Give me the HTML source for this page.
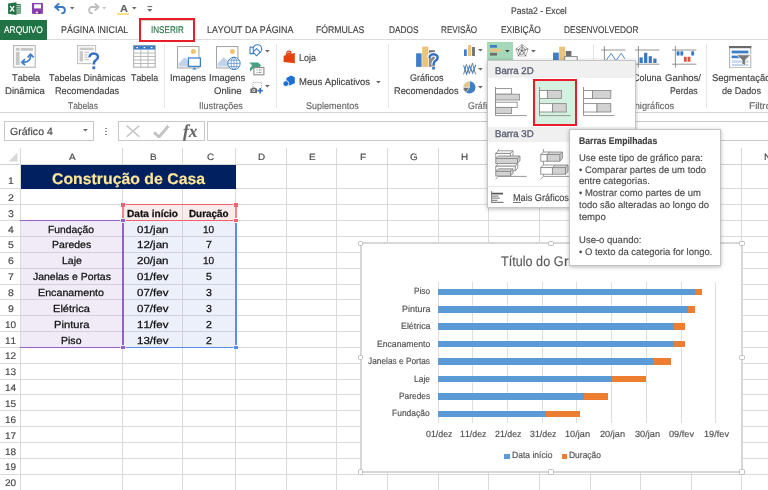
<!DOCTYPE html>
<html><head><meta charset="utf-8"><title>Pasta2 - Excel</title>
<style>
html,body{margin:0;padding:0;background:#fff;}
body{width:768px;height:490px;overflow:hidden;position:relative;font-family:"Liberation Sans",sans-serif;font-kerning:none;}
#root{position:absolute;left:-6px;top:-6px;width:780px;height:502px;overflow:hidden;will-change:transform;filter:blur(0.3px);}
#in{position:absolute;left:6px;top:6px;width:768px;height:490px;}
.t{position:absolute;white-space:nowrap;transform-origin:0 50%;-webkit-text-stroke-width:0.14px;}
.b{position:absolute;box-sizing:border-box;}
</style></head><body><div id="root"><div id="in">
<div class="b" style="left:0.00px;top:147.00px;width:768.00px;height:17.50px;background:#fff;"></div>
<div class="b" style="left:0.00px;top:188.00px;width:768.00px;height:1.00px;background:#dadada;"></div>
<div class="b" style="left:0.00px;top:204.00px;width:768.00px;height:1.00px;background:#dadada;"></div>
<div class="b" style="left:0.00px;top:220.00px;width:768.00px;height:1.00px;background:#dadada;"></div>
<div class="b" style="left:0.00px;top:236.00px;width:768.00px;height:1.00px;background:#dadada;"></div>
<div class="b" style="left:0.00px;top:252.00px;width:768.00px;height:1.00px;background:#dadada;"></div>
<div class="b" style="left:0.00px;top:268.00px;width:768.00px;height:1.00px;background:#dadada;"></div>
<div class="b" style="left:0.00px;top:284.00px;width:768.00px;height:1.00px;background:#dadada;"></div>
<div class="b" style="left:0.00px;top:299.00px;width:768.00px;height:1.00px;background:#dadada;"></div>
<div class="b" style="left:0.00px;top:315.00px;width:768.00px;height:1.00px;background:#dadada;"></div>
<div class="b" style="left:0.00px;top:331.00px;width:768.00px;height:1.00px;background:#dadada;"></div>
<div class="b" style="left:0.00px;top:347.00px;width:768.00px;height:1.00px;background:#dadada;"></div>
<div class="b" style="left:0.00px;top:363.00px;width:768.00px;height:1.00px;background:#dadada;"></div>
<div class="b" style="left:0.00px;top:379.00px;width:768.00px;height:1.00px;background:#dadada;"></div>
<div class="b" style="left:0.00px;top:394.00px;width:768.00px;height:1.00px;background:#dadada;"></div>
<div class="b" style="left:0.00px;top:410.00px;width:768.00px;height:1.00px;background:#dadada;"></div>
<div class="b" style="left:0.00px;top:426.00px;width:768.00px;height:1.00px;background:#dadada;"></div>
<div class="b" style="left:0.00px;top:442.00px;width:768.00px;height:1.00px;background:#dadada;"></div>
<div class="b" style="left:0.00px;top:458.00px;width:768.00px;height:1.00px;background:#dadada;"></div>
<div class="b" style="left:0.00px;top:474.00px;width:768.00px;height:1.00px;background:#dadada;"></div>
<div class="b" style="left:0.00px;top:490.00px;width:768.00px;height:1.00px;background:#dadada;"></div>
<div class="b" style="left:20.00px;top:148.00px;width:1.00px;height:342.00px;background:#dadada;"></div>
<div class="b" style="left:122.00px;top:148.00px;width:1.00px;height:342.00px;background:#dadada;"></div>
<div class="b" style="left:182.00px;top:148.00px;width:1.00px;height:342.00px;background:#dadada;"></div>
<div class="b" style="left:235.00px;top:148.00px;width:1.00px;height:342.00px;background:#dadada;"></div>
<div class="b" style="left:286.00px;top:148.00px;width:1.00px;height:342.00px;background:#dadada;"></div>
<div class="b" style="left:336.00px;top:148.00px;width:1.00px;height:342.00px;background:#dadada;"></div>
<div class="b" style="left:387.00px;top:148.00px;width:1.00px;height:342.00px;background:#dadada;"></div>
<div class="b" style="left:438.00px;top:148.00px;width:1.00px;height:342.00px;background:#dadada;"></div>
<div class="b" style="left:488.00px;top:148.00px;width:1.00px;height:342.00px;background:#dadada;"></div>
<div class="b" style="left:539.00px;top:148.00px;width:1.00px;height:342.00px;background:#dadada;"></div>
<div class="b" style="left:590.00px;top:148.00px;width:1.00px;height:342.00px;background:#dadada;"></div>
<div class="b" style="left:640.00px;top:148.00px;width:1.00px;height:342.00px;background:#dadada;"></div>
<div class="b" style="left:691.00px;top:148.00px;width:1.00px;height:342.00px;background:#dadada;"></div>
<div class="b" style="left:741.00px;top:148.00px;width:1.00px;height:342.00px;background:#dadada;"></div>
<div class="b" style="left:792.00px;top:148.00px;width:1.00px;height:342.00px;background:#dadada;"></div>
<div class="b" style="left:842.00px;top:148.00px;width:1.00px;height:342.00px;background:#dadada;"></div>
<div class="b" style="left:0.00px;top:164.00px;width:768.00px;height:1.00px;background:#d4d4d4;"></div>
<svg class="b" style="left:8.00px;top:152.00px" width="10" height="10" viewBox="0 0 10 10"><path d="M9.5 0.5 V9.5 H0.5 Z" fill="#d9d9d9"/></svg>
<span class="t" style="left:69.33px;top:152px;font-size:9.2px;line-height:10px;color:#444;transform:matrix(1.0814,0,0.0015,1,0,0);">A</span>
<span class="t" style="left:150.43px;top:152px;font-size:9.2px;line-height:10px;color:#444;transform:matrix(1.0814,0,0.0015,1,0,0);">B</span>
<span class="t" style="left:206.58px;top:152px;font-size:9.2px;line-height:10px;color:#444;transform:matrix(1.0753,0,0.0015,1,0,0);">C</span>
<span class="t" style="left:258.48px;top:152px;font-size:9.2px;line-height:10px;color:#444;transform:matrix(1.0753,0,0.0015,1,0,0);">D</span>
<span class="t" style="left:309.33px;top:152px;font-size:9.2px;line-height:10px;color:#444;transform:matrix(1.0814,0,0.0015,1,0,0);">E</span>
<span class="t" style="left:360.19px;top:152px;font-size:9.2px;line-height:10px;color:#444;transform:matrix(1.0889,0,0.0015,1,0,0);">F</span>
<span class="t" style="left:410.02px;top:152px;font-size:9.2px;line-height:10px;color:#444;transform:matrix(1.0699,0,0.0015,1,0,0);">G</span>
<span class="t" style="left:460.88px;top:152px;font-size:9.2px;line-height:10px;color:#444;transform:matrix(1.0753,0,0.0015,1,0,0);">H</span>
<span class="t" style="left:513.52px;top:152px;font-size:9.2px;line-height:10px;color:#444;transform:matrix(1.1951,0,0.0015,1,0,0);">I</span>
<span class="t" style="left:563.10px;top:152px;font-size:9.2px;line-height:10px;color:#444;transform:matrix(1.1088,0,0.0015,1,0,0);">J</span>
<span class="t" style="left:612.93px;top:152px;font-size:9.2px;line-height:10px;color:#444;transform:matrix(1.0814,0,0.0015,1,0,0);">K</span>
<span class="t" style="left:664.04px;top:152px;font-size:9.2px;line-height:10px;color:#444;transform:matrix(1.0976,0,0.0015,1,0,0);">L</span>
<span class="t" style="left:713.37px;top:152px;font-size:9.2px;line-height:10px;color:#444;transform:matrix(1.0653,0,0.0015,1,0,0);">M</span>
<span class="t" style="left:764.48px;top:152px;font-size:9.2px;line-height:10px;color:#444;transform:matrix(1.0753,0,0.0015,1,0,0);">N</span>
<span class="t" style="left:7.63px;top:175px;font-size:9.6px;line-height:11px;color:#444;transform:matrix(1.0936,0,0.0015,1,0,0);">1</span>
<span class="t" style="left:7.63px;top:192px;font-size:9.6px;line-height:11px;color:#444;transform:matrix(1.0936,0,0.0015,1,0,0);">2</span>
<span class="t" style="left:7.63px;top:208px;font-size:9.6px;line-height:11px;color:#444;transform:matrix(1.0936,0,0.0015,1,0,0);">3</span>
<span class="t" style="left:7.63px;top:224px;font-size:9.6px;line-height:11px;color:#444;transform:matrix(1.0936,0,0.0015,1,0,0);">4</span>
<span class="t" style="left:7.63px;top:239px;font-size:9.6px;line-height:11px;color:#444;transform:matrix(1.0936,0,0.0015,1,0,0);">5</span>
<span class="t" style="left:7.63px;top:255px;font-size:9.6px;line-height:11px;color:#444;transform:matrix(1.0936,0,0.0015,1,0,0);">6</span>
<span class="t" style="left:7.63px;top:271px;font-size:9.6px;line-height:11px;color:#444;transform:matrix(1.0936,0,0.0015,1,0,0);">7</span>
<span class="t" style="left:7.63px;top:287px;font-size:9.6px;line-height:11px;color:#444;transform:matrix(1.0936,0,0.0015,1,0,0);">8</span>
<span class="t" style="left:7.63px;top:303px;font-size:9.6px;line-height:11px;color:#444;transform:matrix(1.0936,0,0.0015,1,0,0);">9</span>
<span class="t" style="left:4.96px;top:319px;font-size:9.6px;line-height:11px;color:#444;transform:matrix(1.0469,0,0.0015,1,0,0);">10</span>
<span class="t" style="left:4.96px;top:335px;font-size:9.6px;line-height:11px;color:#444;transform:matrix(1.0469,0,0.0015,1,0,0);">11</span>
<span class="t" style="left:4.96px;top:350px;font-size:9.6px;line-height:11px;color:#444;transform:matrix(1.0469,0,0.0015,1,0,0);">12</span>
<span class="t" style="left:4.96px;top:366px;font-size:9.6px;line-height:11px;color:#444;transform:matrix(1.0469,0,0.0015,1,0,0);">13</span>
<span class="t" style="left:4.96px;top:382px;font-size:9.6px;line-height:11px;color:#444;transform:matrix(1.0469,0,0.0015,1,0,0);">14</span>
<span class="t" style="left:4.96px;top:398px;font-size:9.6px;line-height:11px;color:#444;transform:matrix(1.0469,0,0.0015,1,0,0);">15</span>
<span class="t" style="left:4.96px;top:414px;font-size:9.6px;line-height:11px;color:#444;transform:matrix(1.0469,0,0.0015,1,0,0);">16</span>
<span class="t" style="left:4.96px;top:430px;font-size:9.6px;line-height:11px;color:#444;transform:matrix(1.0469,0,0.0015,1,0,0);">17</span>
<span class="t" style="left:4.96px;top:446px;font-size:9.6px;line-height:11px;color:#444;transform:matrix(1.0469,0,0.0015,1,0,0);">18</span>
<span class="t" style="left:4.96px;top:461px;font-size:9.6px;line-height:11px;color:#444;transform:matrix(1.0469,0,0.0015,1,0,0);">19</span>
<span class="t" style="left:4.96px;top:477px;font-size:9.6px;line-height:11px;color:#444;transform:matrix(1.0469,0,0.0015,1,0,0);">20</span>
<div class="b" style="left:20.50px;top:164.80px;width:215.50px;height:24.10px;background:#002060;"></div>
<span class="t" style="left:51.50px;top:170px;font-size:15.5px;line-height:17px;color:#ffe699;font-weight:bold;transform:matrix(1.0214,0,0.0015,1,0,0);">Construção de Casa</span>
<div class="b" style="left:123.00px;top:204.75px;width:113.00px;height:15.85px;background:#fbebeb;"></div>
<div class="b" style="left:20.50px;top:220.60px;width:102.50px;height:126.80px;background:#f0ebf7;"></div>
<div class="b" style="left:123.00px;top:220.60px;width:113.00px;height:126.80px;background:#ebf0fb;"></div>
<div class="b" style="left:123.00px;top:220.00px;width:113.00px;height:1.00px;background:#d3d0dc;"></div>
<div class="b" style="left:20.50px;top:236.00px;width:215.50px;height:1.00px;background:#d3d0dc;"></div>
<div class="b" style="left:20.50px;top:252.00px;width:215.50px;height:1.00px;background:#d3d0dc;"></div>
<div class="b" style="left:20.50px;top:268.00px;width:215.50px;height:1.00px;background:#d3d0dc;"></div>
<div class="b" style="left:20.50px;top:284.00px;width:215.50px;height:1.00px;background:#d3d0dc;"></div>
<div class="b" style="left:20.50px;top:299.00px;width:215.50px;height:1.00px;background:#d3d0dc;"></div>
<div class="b" style="left:20.50px;top:315.00px;width:215.50px;height:1.00px;background:#d3d0dc;"></div>
<div class="b" style="left:20.50px;top:331.00px;width:215.50px;height:1.00px;background:#d3d0dc;"></div>
<div class="b" style="left:20.50px;top:347.00px;width:215.50px;height:1.00px;background:#d3d0dc;"></div>
<div class="b" style="left:182.00px;top:204.75px;width:1.00px;height:142.65px;background:#d3d3de;"></div>
<div class="b" style="left:125.60px;top:204.10px;width:107.80px;height:1.30px;background:#eb636d;"></div>
<div class="b" style="left:125.60px;top:219.95px;width:107.80px;height:1.30px;background:#eb636d;"></div>
<div class="b" style="left:122.40px;top:207.35px;width:1.20px;height:10.65px;background:#ee8890;"></div>
<div class="b" style="left:235.40px;top:207.35px;width:1.20px;height:10.65px;background:#ee8890;"></div>
<div class="b" style="left:121.20px;top:202.95px;width:3.60px;height:3.60px;background:#eb636d;"></div>
<div class="b" style="left:234.20px;top:202.95px;width:3.60px;height:3.60px;background:#eb636d;"></div>
<div class="b" style="left:234.20px;top:218.80px;width:3.60px;height:3.60px;background:#eb636d;"></div>
<div class="b" style="left:20.40px;top:219.90px;width:100.00px;height:1.40px;background:#9263c6;"></div>
<div class="b" style="left:20.40px;top:346.70px;width:100.00px;height:1.40px;background:#9263c6;"></div>
<div class="b" style="left:122.35px;top:223.20px;width:1.30px;height:121.60px;background:#9263c6;"></div>
<div class="b" style="left:121.20px;top:218.80px;width:3.60px;height:3.60px;background:#9263c6;"></div>
<div class="b" style="left:121.20px;top:345.60px;width:3.60px;height:3.60px;background:#9263c6;"></div>
<div class="b" style="left:125.60px;top:346.70px;width:107.80px;height:1.40px;background:#5d8be8;"></div>
<div class="b" style="left:235.35px;top:223.20px;width:1.30px;height:121.60px;background:#5d8be8;"></div>
<div class="b" style="left:234.20px;top:345.60px;width:3.60px;height:3.60px;background:#5d8be8;"></div>
<span class="t" style="left:127.05px;top:208px;font-size:10.2px;line-height:11px;color:#111;font-weight:bold;transform:matrix(0.9900,0,0.0015,1,0,0);-webkit-text-stroke:0.25px #111;">Data início</span>
<span class="t" style="left:189.25px;top:208px;font-size:10.2px;line-height:11px;color:#111;font-weight:bold;transform:matrix(0.9665,0,0.0015,1,0,0);-webkit-text-stroke:0.25px #111;">Duração</span>
<span class="t" style="left:48.45px;top:224px;font-size:10.2px;line-height:11px;color:#111;transform:matrix(1.0152,0,0.0015,1,0,0);-webkit-text-stroke:0.25px #111;">Fundação</span>
<span class="t" style="left:136.80px;top:224px;font-size:10.2px;line-height:11px;color:#111;transform:matrix(1.1345,0,0.0015,1,0,0);-webkit-text-stroke:0.25px #111;">01/jan</span>
<span class="t" style="left:203.35px;top:224px;font-size:10.2px;line-height:11px;color:#111;transform:matrix(0.9873,0,0.0015,1,0,0);-webkit-text-stroke:0.25px #111;">10</span>
<span class="t" style="left:51.85px;top:239px;font-size:10.2px;line-height:11px;color:#111;transform:matrix(1.0329,0,0.0015,1,0,0);-webkit-text-stroke:0.25px #111;">Paredes</span>
<span class="t" style="left:136.80px;top:239px;font-size:10.2px;line-height:11px;color:#111;transform:matrix(1.1345,0,0.0015,1,0,0);-webkit-text-stroke:0.25px #111;">12/jan</span>
<span class="t" style="left:206.00px;top:239px;font-size:10.2px;line-height:11px;color:#111;transform:matrix(1.0402,0,0.0015,1,0,0);-webkit-text-stroke:0.25px #111;">7</span>
<span class="t" style="left:61.50px;top:255px;font-size:10.2px;line-height:11px;color:#111;transform:matrix(1.0329,0,0.0015,1,0,0);-webkit-text-stroke:0.25px #111;">Laje</span>
<span class="t" style="left:136.80px;top:255px;font-size:10.2px;line-height:11px;color:#111;transform:matrix(1.1345,0,0.0015,1,0,0);-webkit-text-stroke:0.25px #111;">20/jan</span>
<span class="t" style="left:203.35px;top:255px;font-size:10.2px;line-height:11px;color:#111;transform:matrix(0.9873,0,0.0015,1,0,0);-webkit-text-stroke:0.25px #111;">10</span>
<span class="t" style="left:32.50px;top:271px;font-size:10.2px;line-height:11px;color:#111;transform:matrix(1.0265,0,0.0015,1,0,0);-webkit-text-stroke:0.25px #111;">Janelas e Portas</span>
<span class="t" style="left:136.80px;top:271px;font-size:10.2px;line-height:11px;color:#111;transform:matrix(1.1345,0,0.0015,1,0,0);-webkit-text-stroke:0.25px #111;">01/fev</span>
<span class="t" style="left:206.00px;top:271px;font-size:10.2px;line-height:11px;color:#111;transform:matrix(1.0402,0,0.0015,1,0,0);-webkit-text-stroke:0.25px #111;">5</span>
<span class="t" style="left:38.45px;top:287px;font-size:10.2px;line-height:11px;color:#111;transform:matrix(1.0497,0,0.0015,1,0,0);-webkit-text-stroke:0.25px #111;">Encanamento</span>
<span class="t" style="left:136.80px;top:287px;font-size:10.2px;line-height:11px;color:#111;transform:matrix(1.1345,0,0.0015,1,0,0);-webkit-text-stroke:0.25px #111;">07/fev</span>
<span class="t" style="left:206.00px;top:287px;font-size:10.2px;line-height:11px;color:#111;transform:matrix(1.0402,0,0.0015,1,0,0);-webkit-text-stroke:0.25px #111;">3</span>
<span class="t" style="left:53.00px;top:303px;font-size:10.2px;line-height:11px;color:#111;transform:matrix(1.0858,0,0.0015,1,0,0);-webkit-text-stroke:0.25px #111;">Elétrica</span>
<span class="t" style="left:136.80px;top:303px;font-size:10.2px;line-height:11px;color:#111;transform:matrix(1.1345,0,0.0015,1,0,0);-webkit-text-stroke:0.25px #111;">07/fev</span>
<span class="t" style="left:206.00px;top:303px;font-size:10.2px;line-height:11px;color:#111;transform:matrix(1.0402,0,0.0015,1,0,0);-webkit-text-stroke:0.25px #111;">3</span>
<span class="t" style="left:53.70px;top:319px;font-size:10.2px;line-height:11px;color:#111;transform:matrix(1.0997,0,0.0015,1,0,0);-webkit-text-stroke:0.25px #111;">Pintura</span>
<span class="t" style="left:136.80px;top:319px;font-size:10.2px;line-height:11px;color:#111;transform:matrix(1.1345,0,0.0015,1,0,0);-webkit-text-stroke:0.25px #111;">11/fev</span>
<span class="t" style="left:206.00px;top:319px;font-size:10.2px;line-height:11px;color:#111;transform:matrix(1.0402,0,0.0015,1,0,0);-webkit-text-stroke:0.25px #111;">2</span>
<span class="t" style="left:61.20px;top:335px;font-size:10.2px;line-height:11px;color:#111;transform:matrix(1.0339,0,0.0015,1,0,0);-webkit-text-stroke:0.25px #111;">Piso</span>
<span class="t" style="left:136.80px;top:335px;font-size:10.2px;line-height:11px;color:#111;transform:matrix(1.1345,0,0.0015,1,0,0);-webkit-text-stroke:0.25px #111;">13/fev</span>
<span class="t" style="left:206.00px;top:335px;font-size:10.2px;line-height:11px;color:#111;transform:matrix(1.0402,0,0.0015,1,0,0);-webkit-text-stroke:0.25px #111;">2</span>
<div class="b" style="left:359.50px;top:242.30px;width:383.50px;height:230.80px;background:#fff;border:2px solid #d7d7d7;"></div>
<div class="b" style="left:357.70px;top:240.50px;width:5.60px;height:5.60px;background:#fff;border:1px solid #bdbdbd;border-radius:1.4px;"></div>
<div class="b" style="left:548.45px;top:240.50px;width:5.60px;height:5.60px;background:#fff;border:1px solid #bdbdbd;border-radius:1.4px;"></div>
<div class="b" style="left:739.20px;top:240.50px;width:5.60px;height:5.60px;background:#fff;border:1px solid #bdbdbd;border-radius:1.4px;"></div>
<div class="b" style="left:357.70px;top:354.90px;width:5.60px;height:5.60px;background:#fff;border:1px solid #bdbdbd;border-radius:1.4px;"></div>
<div class="b" style="left:739.20px;top:354.90px;width:5.60px;height:5.60px;background:#fff;border:1px solid #bdbdbd;border-radius:1.4px;"></div>
<div class="b" style="left:357.70px;top:469.30px;width:5.60px;height:5.60px;background:#fff;border:1px solid #bdbdbd;border-radius:1.4px;"></div>
<div class="b" style="left:548.45px;top:469.30px;width:5.60px;height:5.60px;background:#fff;border:1px solid #bdbdbd;border-radius:1.4px;"></div>
<div class="b" style="left:739.20px;top:469.30px;width:5.60px;height:5.60px;background:#fff;border:1px solid #bdbdbd;border-radius:1.4px;"></div>
<div class="b" style="left:438.00px;top:282.00px;width:1.00px;height:140.60px;background:#dedede;"></div>
<div class="b" style="left:472.00px;top:282.00px;width:1.00px;height:140.60px;background:#dedede;"></div>
<div class="b" style="left:507.00px;top:282.00px;width:1.00px;height:140.60px;background:#dedede;"></div>
<div class="b" style="left:542.00px;top:282.00px;width:1.00px;height:140.60px;background:#dedede;"></div>
<div class="b" style="left:576.00px;top:282.00px;width:1.00px;height:140.60px;background:#dedede;"></div>
<div class="b" style="left:611.00px;top:282.00px;width:1.00px;height:140.60px;background:#dedede;"></div>
<div class="b" style="left:646.00px;top:282.00px;width:1.00px;height:140.60px;background:#dedede;"></div>
<div class="b" style="left:681.00px;top:282.00px;width:1.00px;height:140.60px;background:#dedede;"></div>
<div class="b" style="left:715.00px;top:282.00px;width:1.00px;height:140.60px;background:#dedede;"></div>
<div class="b" style="left:438.20px;top:288.60px;width:256.78px;height:6.50px;background:#5b9bd5;"></div>
<div class="b" style="left:694.98px;top:288.60px;width:6.94px;height:6.50px;background:#ed7d31;"></div>
<span class="t" style="left:414.10px;top:286px;font-size:9.0px;line-height:10px;color:#505050;transform:matrix(0.9135,0,0.0015,1,0,0);-webkit-text-stroke:0.15px #505050;">Piso</span>
<div class="b" style="left:438.20px;top:306.03px;width:249.84px;height:6.50px;background:#5b9bd5;"></div>
<div class="b" style="left:688.04px;top:306.03px;width:6.94px;height:6.50px;background:#ed7d31;"></div>
<span class="t" style="left:401.70px;top:304px;font-size:9.0px;line-height:10px;color:#505050;transform:matrix(0.9954,0,0.0015,1,0,0);-webkit-text-stroke:0.15px #505050;">Pintura</span>
<div class="b" style="left:438.20px;top:323.46px;width:235.96px;height:6.50px;background:#5b9bd5;"></div>
<div class="b" style="left:674.16px;top:323.46px;width:10.41px;height:6.50px;background:#ed7d31;"></div>
<span class="t" style="left:400.60px;top:321px;font-size:9.0px;line-height:10px;color:#505050;transform:matrix(0.9828,0,0.0015,1,0,0);-webkit-text-stroke:0.15px #505050;">Elétrica</span>
<div class="b" style="left:438.20px;top:340.89px;width:235.96px;height:6.50px;background:#5b9bd5;"></div>
<div class="b" style="left:674.16px;top:340.89px;width:10.41px;height:6.50px;background:#ed7d31;"></div>
<span class="t" style="left:376.90px;top:339px;font-size:9.0px;line-height:10px;color:#505050;transform:matrix(0.9577,0,0.0015,1,0,0);-webkit-text-stroke:0.15px #505050;">Encanamento</span>
<div class="b" style="left:438.20px;top:358.32px;width:215.14px;height:6.50px;background:#5b9bd5;"></div>
<div class="b" style="left:653.34px;top:358.32px;width:17.35px;height:6.50px;background:#ed7d31;"></div>
<span class="t" style="left:368.10px;top:356px;font-size:9.0px;line-height:10px;color:#505050;transform:matrix(0.9247,0,0.0015,1,0,0);-webkit-text-stroke:0.15px #505050;">Janelas e Portas</span>
<div class="b" style="left:438.20px;top:375.75px;width:173.50px;height:6.50px;background:#5b9bd5;"></div>
<div class="b" style="left:611.70px;top:375.75px;width:34.70px;height:6.50px;background:#ed7d31;"></div>
<span class="t" style="left:414.10px;top:374px;font-size:9.0px;line-height:10px;color:#505050;transform:matrix(0.9403,0,0.0015,1,0,0);-webkit-text-stroke:0.15px #505050;">Laje</span>
<div class="b" style="left:438.20px;top:393.18px;width:145.74px;height:6.50px;background:#5b9bd5;"></div>
<div class="b" style="left:583.94px;top:393.18px;width:24.29px;height:6.50px;background:#ed7d31;"></div>
<span class="t" style="left:399.00px;top:391px;font-size:9.0px;line-height:10px;color:#505050;transform:matrix(0.9275,0,0.0015,1,0,0);-webkit-text-stroke:0.15px #505050;">Paredes</span>
<div class="b" style="left:438.20px;top:410.61px;width:107.57px;height:6.50px;background:#5b9bd5;"></div>
<div class="b" style="left:545.77px;top:410.61px;width:34.70px;height:6.50px;background:#ed7d31;"></div>
<span class="t" style="left:392.40px;top:408px;font-size:9.0px;line-height:10px;color:#505050;transform:matrix(0.9418,0,0.0015,1,0,0);-webkit-text-stroke:0.15px #505050;">Fundação</span>
<span class="t" style="left:425.60px;top:429px;font-size:9.0px;line-height:10px;color:#505050;transform:matrix(0.9803,0,0.0015,1,0,0);-webkit-text-stroke:0.15px #505050;">01/dez</span>
<span class="t" style="left:460.30px;top:429px;font-size:9.0px;line-height:10px;color:#505050;transform:matrix(0.9803,0,0.0015,1,0,0);-webkit-text-stroke:0.15px #505050;">11/dez</span>
<span class="t" style="left:495.00px;top:429px;font-size:9.0px;line-height:10px;color:#505050;transform:matrix(0.9803,0,0.0015,1,0,0);-webkit-text-stroke:0.15px #505050;">21/dez</span>
<span class="t" style="left:529.70px;top:429px;font-size:9.0px;line-height:10px;color:#505050;transform:matrix(0.9803,0,0.0015,1,0,0);-webkit-text-stroke:0.15px #505050;">31/dez</span>
<span class="t" style="left:565.15px;top:429px;font-size:9.0px;line-height:10px;color:#505050;transform:matrix(1.0191,0,0.0015,1,0,0);-webkit-text-stroke:0.15px #505050;">10/jan</span>
<span class="t" style="left:599.85px;top:429px;font-size:9.0px;line-height:10px;color:#505050;transform:matrix(1.0191,0,0.0015,1,0,0);-webkit-text-stroke:0.15px #505050;">20/jan</span>
<span class="t" style="left:634.55px;top:429px;font-size:9.0px;line-height:10px;color:#505050;transform:matrix(1.0191,0,0.0015,1,0,0);-webkit-text-stroke:0.15px #505050;">30/jan</span>
<span class="t" style="left:669.25px;top:429px;font-size:9.0px;line-height:10px;color:#505050;transform:matrix(1.0191,0,0.0015,1,0,0);-webkit-text-stroke:0.15px #505050;">09/fev</span>
<span class="t" style="left:703.95px;top:429px;font-size:9.0px;line-height:10px;color:#505050;transform:matrix(1.0191,0,0.0015,1,0,0);-webkit-text-stroke:0.15px #505050;">19/fev</span>
<span class="t" style="left:501.40px;top:253px;font-size:14px;line-height:16px;color:#595959;transform:matrix(0.9023,0,0.0015,1,0,0);">Título do G</span>
<span class="t" style="left:564.20px;top:253px;font-size:14px;line-height:16px;color:#595959;transform:matrix(1.0021,0,0.0015,1,0,0);">r</span>
<div class="b" style="left:504.20px;top:454.00px;width:5.40px;height:4.80px;background:#5b9bd5;"></div>
<span class="t" style="left:512.30px;top:450px;font-size:9.0px;line-height:10px;color:#505050;transform:matrix(0.9499,0,0.0015,1,0,0);-webkit-text-stroke:0.15px #505050;">Data início</span>
<div class="b" style="left:561.50px;top:454.00px;width:5.40px;height:4.80px;background:#ed7d31;"></div>
<span class="t" style="left:569.10px;top:450px;font-size:9.0px;line-height:10px;color:#505050;transform:matrix(0.9403,0,0.0015,1,0,0);-webkit-text-stroke:0.15px #505050;">Duração</span>
<div class="b" style="left:0.00px;top:0.00px;width:768.00px;height:147.00px;background:#fff;"></div>
<span class="t" style="left:510.90px;top:5px;font-size:9.6px;line-height:11px;color:#444;transform:matrix(0.9004,0,0.0015,1,0,0);">Pasta2 - Excel</span>
<svg class="b" style="left:8.00px;top:1.60px" width="13" height="13.4" viewBox="0 0 13 13.4"><rect x="7.6" y="2.4" width="4.6" height="8.8" fill="#e4f0e8" stroke="#217346" stroke-width="0.9"/>
<path d="M8 4.6H12.2M8 6.8H12.2M8 9H12.2M10 2.4V11.2" stroke="#217346" stroke-width="0.7"/>
<path d="M0.1 1.5 L8.5 0.3 V13 L0.1 11.7Z" fill="#217346"/>
<path d="M2.2 4.1L6.2 9.5M6.2 4.1L2.2 9.5" stroke="#fff" stroke-width="1.3"/></svg>
<svg class="b" style="left:31.80px;top:3.10px" width="11" height="11" viewBox="0 0 11 11"><rect x="0" y="0" width="10.9" height="10.8" fill="#8a40b0"/><rect x="2.1" y="1.3" width="6.9" height="4.1" fill="#fff"/><rect x="2.4" y="7.6" width="6.2" height="3.2" fill="#7a35a0"/><rect x="3.8" y="8.6" width="2.1" height="1.7" fill="#fff"/></svg>
<svg class="b" style="left:54.00px;top:3.00px" width="16" height="11.4" viewBox="0 0 16 11.4"><path d="M1.6 4 H8.4 A3.3 3.3 0 0 1 8.4 10.4 H7.2" fill="none" stroke="#3a78c2" stroke-width="1.9"/><path d="M5.2 0.4 L1.2 4 L5.2 7.6" fill="none" stroke="#3a78c2" stroke-width="1.9"/></svg>
<svg class="b" style="left:70.20px;top:7.00px" width="5" height="3" viewBox="0 0 5 3"><path d="M0 0H4.4L2.2 2.4Z" fill="#666"/></svg>
<svg class="b" style="left:85.50px;top:3.00px" width="14" height="11.4" viewBox="0 0 14 11.4"><path d="M12 4 H5.6 A3.3 3.3 0 0 0 5.6 10.4 H6.8" fill="none" stroke="#bdbdbd" stroke-width="1.8"/><path d="M8.8 0.5 L12.6 4 L8.8 7.5" fill="none" stroke="#bdbdbd" stroke-width="1.8"/></svg>
<svg class="b" style="left:101.60px;top:7.00px" width="5" height="3" viewBox="0 0 5 3"><path d="M0 0H4.4L2.2 2.4Z" fill="#c8c8c8"/></svg>
<span class="t" style="left:119.70px;top:3px;font-size:10.2px;line-height:11px;color:#666;font-weight:bold;transform:matrix(1.0735,0,0.0015,1,0,0);">A</span>
<div class="b" style="left:116.70px;top:12.70px;width:12.80px;height:2.00px;background:#f7e184;"></div>
<svg class="b" style="left:132.00px;top:7.20px" width="5" height="3" viewBox="0 0 5 3"><path d="M0 0H4.6L2.3 2.6Z" fill="#666"/></svg>
<svg class="b" style="left:147.20px;top:5.60px" width="6" height="7" viewBox="0 0 6 7"><path d="M0.4 0.6H5.2" stroke="#666" stroke-width="1"/><path d="M0.2 3H5.4L2.8 5.8Z" fill="#666"/></svg>
<div class="b" style="left:0.00px;top:39.00px;width:768.00px;height:1.00px;background:#dcdcdc;"></div>
<div class="b" style="left:0.00px;top:19.70px;width:46.60px;height:19.90px;background:#217346;"></div>
<span class="t" style="left:4.30px;top:24px;font-size:9.7px;line-height:11px;color:#fff;transform:matrix(0.8660,0,0.0015,1,0,0);">ARQUIVO</span>
<span class="t" style="left:60.60px;top:24px;font-size:9.7px;line-height:11px;color:#3e3e3e;transform:matrix(0.9192,0,0.0015,1,0,0);">PÁGINA INICIAL</span>
<div class="b" style="left:139.80px;top:19.60px;width:55.20px;height:20.60px;background:#fff;border:1px solid #d4d4d4;border-bottom:none;"></div>
<span class="t" style="left:150.90px;top:24px;font-size:9.7px;line-height:11px;color:#217346;transform:matrix(0.8347,0,0.0015,1,0,0);">INSERIR</span>
<div class="b" style="left:139.20px;top:17.70px;width:55.80px;height:24.00px;border:2px solid #e81c2a;"></div>
<span class="t" style="left:206.60px;top:24px;font-size:9.7px;line-height:11px;color:#3e3e3e;transform:matrix(0.9170,0,0.0015,1,0,0);">LAYOUT DA PÁGINA</span>
<span class="t" style="left:316.30px;top:24px;font-size:9.7px;line-height:11px;color:#3e3e3e;transform:matrix(0.8973,0,0.0015,1,0,0);">FÓRMULAS</span>
<span class="t" style="left:388.60px;top:24px;font-size:9.7px;line-height:11px;color:#3e3e3e;transform:matrix(0.8533,0,0.0015,1,0,0);">DADOS</span>
<span class="t" style="left:441.30px;top:24px;font-size:9.7px;line-height:11px;color:#3e3e3e;transform:matrix(0.8403,0,0.0015,1,0,0);">REVISÃO</span>
<span class="t" style="left:500.80px;top:24px;font-size:9.7px;line-height:11px;color:#3e3e3e;transform:matrix(0.8696,0,0.0015,1,0,0);">EXIBIÇÃO</span>
<span class="t" style="left:563.60px;top:24px;font-size:9.7px;line-height:11px;color:#3e3e3e;transform:matrix(0.8542,0,0.0015,1,0,0);">DESENVOLVEDOR</span>
<div class="b" style="left:0.00px;top:112.00px;width:768.00px;height:1.00px;background:#d4d4d4;"></div>
<div class="b" style="left:164.00px;top:43.50px;width:1.00px;height:64.50px;background:#e6e6e6;"></div>
<div class="b" style="left:276.00px;top:43.50px;width:1.00px;height:64.50px;background:#e6e6e6;"></div>
<div class="b" style="left:388.00px;top:43.50px;width:1.00px;height:64.50px;background:#e6e6e6;"></div>
<div class="b" style="left:593.00px;top:43.50px;width:1.00px;height:64.50px;background:#e6e6e6;"></div>
<div class="b" style="left:706.00px;top:43.50px;width:1.00px;height:64.50px;background:#e6e6e6;"></div>
<span class="t" style="left:67.60px;top:100px;font-size:9.7px;line-height:11px;color:#666;transform:matrix(0.8704,0,0.0015,1,0,0);">Tabelas</span>
<span class="t" style="left:199.30px;top:100px;font-size:9.7px;line-height:11px;color:#666;transform:matrix(0.9372,0,0.0015,1,0,0);">Ilustrações</span>
<span class="t" style="left:306.10px;top:100px;font-size:9.7px;line-height:11px;color:#666;transform:matrix(0.9320,0,0.0015,1,0,0);">Suplementos</span>
<span class="t" style="left:468.10px;top:100px;font-size:9.7px;line-height:11px;color:#666;transform:matrix(0.9147,0,0.0015,1,0,0);">Gráficos</span>
<span class="t" style="left:625.40px;top:100px;font-size:9.7px;line-height:11px;color:#666;transform:matrix(0.9519,0,0.0015,1,0,0);">Minigráficos</span>
<span class="t" style="left:748.80px;top:100px;font-size:9.7px;line-height:11px;color:#666;transform:matrix(1.0351,0,0.0015,1,0,0);">Filtros</span>
<svg class="b" style="left:13.00px;top:45.20px" width="23" height="23" viewBox="0 0 23 23"><rect x="0.6" y="0.6" width="21.6" height="21.6" fill="#fff" stroke="#b5b5b5" stroke-width="1.1"/>
<rect x="2.8" y="2.8" width="3.8" height="3" fill="#c6c6c6"/><rect x="7.6" y="2.8" width="12.4" height="3" fill="#c6c6c6"/><rect x="2.8" y="6.8" width="3.8" height="13.2" fill="#c6c6c6"/>
<path d="M9.8 17.2 H11.6 A6 6 0 0 0 17.6 11.2 V9.8" fill="none" stroke="#3c7fc9" stroke-width="1.7"/>
<path d="M12 14.2 L8.8 17.2 L12 20.2" fill="none" stroke="#3c7fc9" stroke-width="1.7"/><path d="M14.6 12.4 L17.6 9.2 L20.6 12.4" fill="none" stroke="#3c7fc9" stroke-width="1.7"/></svg>
<span class="t" style="left:11.60px;top:72px;font-size:9.7px;line-height:11px;color:#3e3e3e;transform:matrix(0.9519,0,0.0015,1,0,0);">Tabela</span>
<span class="t" style="left:5.00px;top:85px;font-size:9.7px;line-height:11px;color:#3e3e3e;transform:matrix(0.9879,0,0.0015,1,0,0);">Dinâmica</span>
<svg class="b" style="left:77.30px;top:45.20px" width="23" height="25" viewBox="0 0 23 25"><rect x="0.6" y="0.6" width="18" height="18" fill="#fff" stroke="#c2c2c2" stroke-width="1.1"/>
<rect x="2.6" y="2.6" width="14" height="2.6" fill="#c9c9c9"/><rect x="2.6" y="6.2" width="3.4" height="10.4" fill="#c9c9c9"/>
<path d="M7.4 7.4H12M7.4 9.8H12M7.4 12.2H12M7.4 14.6H12" stroke="#c9c9c9" stroke-width="1.2"/>
<path d="M12.4 12.2 C12.6 8.8 16 7.8 18.6 8.8 C22 10.2 21.4 13.6 19 15 C17.4 16 16.8 17 16.8 19.4" fill="none" stroke="#fff" stroke-width="4.6"/>
<path d="M12.4 12.2 C12.6 8.8 16 7.8 18.6 8.8 C22 10.2 21.4 13.6 19 15 C17.4 16 16.8 17 16.8 19.4" fill="none" stroke="#3471c1" stroke-width="2.5"/>
<rect x="15.4" y="21.4" width="2.8" height="2.8" fill="#3471c1"/></svg>
<span class="t" style="left:49.20px;top:72px;font-size:9.7px;line-height:11px;color:#3e3e3e;transform:matrix(0.9273,0,0.0015,1,0,0);">Tabelas Dinâmicas</span>
<span class="t" style="left:55.40px;top:85px;font-size:9.7px;line-height:11px;color:#3e3e3e;transform:matrix(0.9461,0,0.0015,1,0,0);">Recomendadas</span>
<svg class="b" style="left:133.30px;top:45.20px" width="23" height="23" viewBox="0 0 23 23"><rect x="0.6" y="0.6" width="21.6" height="21.6" fill="#fff" stroke="#b3b3b3" stroke-width="1.1"/>
<rect x="0.6" y="0.6" width="21.6" height="4" fill="#3d7cc9"/>
<path d="M0.6 8H22.2M0.6 11.5H22.2M0.6 15H22.2M0.6 18.5H22.2M7.8 4.6V22.2M15 4.6V22.2" stroke="#b3b3b3" stroke-width="0.9"/>
<rect x="3.4" y="2" width="1.6" height="1.2" fill="#fff"/><rect x="10.6" y="2" width="1.6" height="1.2" fill="#fff"/><rect x="17.8" y="2" width="1.6" height="1.2" fill="#fff"/></svg>
<span class="t" style="left:131.10px;top:72px;font-size:9.7px;line-height:11px;color:#3e3e3e;transform:matrix(0.9148,0,0.0015,1,0,0);">Tabela</span>
<svg class="b" style="left:177.30px;top:46.00px" width="25" height="25" viewBox="0 0 25 25"><rect x="0.55" y="0.55" width="21.4" height="21.4" fill="#fff" stroke="#a0a0a0" stroke-width="1"/><circle cx="16.4" cy="5.4" r="2.5" fill="#f2c36b"/><path d="M1.6 20.4 V17.6 L7.8 11 L12.4 16 L13.6 14.8 L16 17.4 V20.4Z" fill="#c3d4ea"/><rect x="11.4" y="12" width="12" height="8.4" fill="#fff" stroke="#3c7fc9" stroke-width="1.25"/><path d="M17.4 21.4 L15 23.4 H19.8Z" fill="#3c7fc9"/></svg>
<span class="t" style="left:170.10px;top:72px;font-size:9.7px;line-height:11px;color:#3e3e3e;transform:matrix(0.9662,0,0.0015,1,0,0);">Imagens</span>
<svg class="b" style="left:216.30px;top:46.00px" width="26" height="25" viewBox="0 0 26 25"><rect x="0.55" y="0.55" width="21.4" height="21.4" fill="#fff" stroke="#a0a0a0" stroke-width="1"/><circle cx="16.4" cy="5.4" r="2.5" fill="#f2c36b"/><path d="M1.6 20.4 V17.6 L7.8 11 L12.4 16 L13.6 14.8 L16 17.4 V20.4Z" fill="#c3d4ea"/><circle cx="18" cy="17.4" r="6.2" fill="#fff" stroke="#4a86cc" stroke-width="1"/><path d="M11.8 17.4H24.2M18 11.2V23.6M12.8 14.2H23.2M12.8 20.6H23.2" stroke="#4a86cc" stroke-width="0.7" fill="none"/><ellipse cx="18" cy="17.4" rx="2.9" ry="6.2" fill="none" stroke="#4a86cc" stroke-width="0.7"/></svg>
<span class="t" style="left:209.40px;top:72px;font-size:9.7px;line-height:11px;color:#3e3e3e;transform:matrix(0.9743,0,0.0015,1,0,0);">Imagens</span>
<span class="t" style="left:214.10px;top:85px;font-size:9.7px;line-height:11px;color:#3e3e3e;transform:matrix(0.9816,0,0.0015,1,0,0);">Online</span>
<svg class="b" style="left:249.00px;top:44.00px" width="15" height="13" viewBox="0 0 15 13"><path d="M1 3.2H6.4" stroke="#3c7fc9" stroke-width="1.1" fill="none"/><path d="M1 2.8V9.6H5" stroke="#3c7fc9" stroke-width="1.1" fill="none"/><circle cx="8.4" cy="5" r="4.3" fill="#fff" stroke="#3c7fc9" stroke-width="1.1"/><path d="M7.6 4.6 L11.2 8.2 L7.6 11.8 L4 8.2Z" fill="#fff" stroke="#3c7fc9" stroke-width="1.1"/></svg>
<svg class="b" style="left:265.00px;top:49.70px" width="5" height="3" viewBox="0 0 5 3"><path d="M0 0H4.8L2.4 2.6Z" fill="#666"/></svg>
<svg class="b" style="left:249.00px;top:62.00px" width="16" height="13.5" viewBox="0 0 16 13.5"><path d="M0.4 0.6H9.2L12.2 3.4L9.2 6.2H4.4L1 9.8V6.2L3.2 3.4Z" fill="#46a283"/><rect x="4.9" y="5.6" width="10" height="7.2" fill="#fff" stroke="#8a8a8a" stroke-width="1.1"/><path d="M7.4 8H8.6M9.6 8H12.6M7.4 10.4H8.6M9.6 10.4H12.6" stroke="#8a8a8a" stroke-width="0.9"/></svg>
<svg class="b" style="left:249.60px;top:81.80px" width="14" height="12" viewBox="0 0 14 12"><rect x="3" y="0.5" width="8.6" height="7" fill="none" stroke="#9a9a9a" stroke-width="0.8" stroke-dasharray="1.2 1"/><path d="M0.4 6.6H1.8L2.6 5.6H5.2L6 6.6H7V11H0.4Z" fill="#666"/><circle cx="3.8" cy="8.6" r="1.5" fill="#fff"/><circle cx="3.8" cy="8.6" r="0.8" fill="#666"/><path d="M10.2 6V11.4M7.5 8.7H12.9" stroke="#2f6fc4" stroke-width="1.6"/></svg>
<svg class="b" style="left:265.00px;top:85.30px" width="5" height="3" viewBox="0 0 5 3"><path d="M0 0H4.8L2.4 2.6Z" fill="#666"/></svg>
<svg class="b" style="left:283.00px;top:49.60px" width="13" height="14" viewBox="0 0 13 14"><path d="M0.6 5.7 L11.8 3.1 V13.3 L0.6 11.9Z" fill="#e5420f"/><path d="M2.8 5.4 C2.6 1.6 4.6 0.4 6.4 0.6 C8 0.8 8.6 2.2 8.6 4Z" fill="#e5420f"/><path d="M4.2 3.4 C4.4 2.2 5.6 1.8 6.8 2.6" fill="none" stroke="#fff" stroke-width="0.7"/></svg>
<span class="t" style="left:298.50px;top:52px;font-size:9.7px;line-height:11px;color:#3e3e3e;transform:matrix(0.9221,0,0.0015,1,0,0);">Loja</span>
<svg class="b" style="left:283.00px;top:75.40px" width="13" height="12" viewBox="0 0 13 12"><path d="M3.4 3 L8 0.5 L11.8 2.2 V8.2 L6.6 10.4 L3.4 9.2Z" fill="#1c70d4"/><circle cx="2.9" cy="8.6" r="2.9" fill="#1c70d4" stroke="#fff" stroke-width="0.8"/></svg>
<span class="t" style="left:298.50px;top:76px;font-size:9.7px;line-height:11px;color:#3e3e3e;transform:matrix(0.9782,0,0.0015,1,0,0);">Meus Aplicativos</span>
<svg class="b" style="left:376.30px;top:80.50px" width="5" height="3" viewBox="0 0 5 3"><path d="M0 0H4.8L2.4 2.6Z" fill="#666"/></svg>
<svg class="b" style="left:416.00px;top:46.00px" width="24" height="24" viewBox="0 0 24 24"><rect x="0.1" y="7.3" width="5.5" height="13.6" fill="#3f7fc6"/><rect x="6.2" y="0.6" width="6.2" height="20.3" fill="#ebc37c"/><rect x="13" y="4.2" width="5.9" height="2" fill="#777"/><rect x="13" y="6.2" width="5.9" height="14.7" fill="#8a8a8a"/>
<path d="M13.4 12 C13.6 8.6 17 7.6 19.4 8.6 C22.6 10 22 13.2 19.8 14.6 C18.2 15.6 17.6 16.6 17.6 19" fill="none" stroke="#fff" stroke-width="4.6"/>
<path d="M13.4 12 C13.6 8.6 17 7.6 19.4 8.6 C22.6 10 22 13.2 19.8 14.6 C18.2 15.6 17.6 16.6 17.6 19" fill="none" stroke="#3471c1" stroke-width="2.4"/>
<rect x="15.2" y="20.2" width="4.2" height="3.6" fill="#fff"/><rect x="16.2" y="20.8" width="2.7" height="2.7" fill="#3471c1"/></svg>
<span class="t" style="left:410.00px;top:72px;font-size:9.7px;line-height:11px;color:#3e3e3e;transform:matrix(0.9313,0,0.0015,1,0,0);">Gráficos</span>
<span class="t" style="left:394.10px;top:85px;font-size:9.7px;line-height:11px;color:#3e3e3e;transform:matrix(0.9505,0,0.0015,1,0,0);">Recomendados</span>
<svg class="b" style="left:463.80px;top:45.00px" width="11" height="11" viewBox="0 0 11 11"><rect x="0" y="4.4" width="2.8" height="6.6" fill="#3f7fc6"/><rect x="3.9" y="0" width="3.4" height="11" fill="#ebc37c"/><rect x="8.1" y="2" width="2.8" height="9" fill="#6e6e6e"/></svg>
<svg class="b" style="left:478.10px;top:49.40px" width="5" height="3" viewBox="0 0 5 3"><path d="M0 0H4.8L2.4 2.6Z" fill="#666"/></svg>
<svg class="b" style="left:463.00px;top:62.00px" width="14" height="13.5" viewBox="0 0 14 13.5"><path d="M0.6 12.4 L3.4 2.4 L6.4 11.6 L9.4 1 L12.6 12.4" fill="none" stroke="#6e6e6e" stroke-width="0.9"/><path d="M0.6 3.4 L3.6 12 L6.6 3.8 L9.6 11 L12.8 2.8" fill="none" stroke="#3f7fc6" stroke-width="1.1"/></svg>
<svg class="b" style="left:478.10px;top:67.60px" width="5" height="3" viewBox="0 0 5 3"><path d="M0 0H4.8L2.4 2.6Z" fill="#666"/></svg>
<svg class="b" style="left:462.60px;top:80.90px" width="13" height="13" viewBox="0 0 13 13"><circle cx="6.4" cy="6.4" r="6.1" fill="#3f7fc6"/><path d="M6.4 6.4 V0.3 A6.1 6.1 0 0 0 0.3 6.4Z" fill="#ebc37c" stroke="#fff" stroke-width="0.6"/><path d="M6.4 6.4 H0.3 A6.1 6.1 0 0 0 3 11.5Z" fill="#6e6e6e" stroke="#fff" stroke-width="0.6"/></svg>
<svg class="b" style="left:478.10px;top:86.00px" width="5" height="3" viewBox="0 0 5 3"><path d="M0 0H4.8L2.4 2.6Z" fill="#666"/></svg>
<div class="b" style="left:486.90px;top:41.60px;width:26.00px;height:19.40px;background:#a5d8b9;"></div>
<svg class="b" style="left:490.00px;top:45.20px" width="12" height="11" viewBox="0 0 12 11"><rect x="0" y="0" width="7" height="2.7" fill="#3f7fc6"/><rect x="0" y="3.8" width="10.8" height="3" fill="#ebc37c"/><rect x="0" y="7.9" width="7" height="2.7" fill="#6e6e6e"/></svg>
<svg class="b" style="left:504.60px;top:49.70px" width="5" height="3" viewBox="0 0 5 3"><path d="M0 0H4.8L2.4 2.6Z" fill="#444"/></svg>
<svg class="b" style="left:515.00px;top:44.00px" width="14" height="13" viewBox="0 0 14 13"><path d="M7 0.6 L13 5 L10.8 12 H3.2 L1 5Z" fill="none" stroke="#9a9a9a" stroke-width="0.7"/><path d="M7 6.6 L7 0.4M7 6.6L13.2 4.8M7 6.6L11 12.2M7 6.6L3 12.2M7 6.6L0.8 4.8" stroke="#6a6a6a" stroke-width="0.9"/><path d="M7 2.6 L10.6 5.6 L8.6 9.8 L4.6 10.6 L3.2 5.8Z" fill="none" stroke="#7a7a7a" stroke-width="0.8"/></svg>
<svg class="b" style="left:530.60px;top:49.70px" width="5" height="3" viewBox="0 0 5 3"><path d="M0 0H4.8L2.4 2.6Z" fill="#666"/></svg>
<svg class="b" style="left:553.00px;top:46.00px" width="25" height="16" viewBox="0 0 25 16"><rect x="0" y="6.6" width="5.8" height="9.4" fill="#3f7fc6"/><rect x="6.2" y="0.7" width="6" height="15.3" fill="#ebc37c"/><rect x="12.8" y="5" width="5.6" height="11" fill="#6e6e6e"/><rect x="11.6" y="10.6" width="12.6" height="6" fill="#fff" stroke="#8a8a8a" stroke-width="1"/></svg>
<svg class="b" style="left:600.90px;top:45.50px" width="25" height="22" viewBox="0 0 25 22"><path d="M0 4H24.4M0 18.2H24.4M3.4 0V21.6" stroke="#7a7a7a" stroke-width="0.8"/><path d="M4.6 15.2 L10.2 7.4 L15 14.8 L20.2 7.2 L23.8 12.8" fill="none" stroke="#4f8bd0" stroke-width="1"/></svg>
<svg class="b" style="left:634.60px;top:45.50px" width="25" height="22" viewBox="0 0 25 22"><path d="M0 4H24.4M0 18.2H24.4M3.4 0V21.6" stroke="#7a7a7a" stroke-width="0.8"/><rect x="4.5" y="11.4" width="3.2" height="5.6" fill="#3778c4"/><rect x="9.1" y="6.8" width="3.2" height="10.2" fill="#3778c4"/><rect x="13.7" y="10.2" width="3.2" height="6.8" fill="#3778c4"/><rect x="18.3" y="12.6" width="3.2" height="4.4" fill="#3778c4"/></svg>
<span class="t" style="left:632.70px;top:72px;font-size:9.7px;line-height:11px;color:#3e3e3e;transform:matrix(0.9315,0,0.0015,1,0,0);">Coluna</span>
<svg class="b" style="left:671.60px;top:45.50px" width="25" height="22" viewBox="0 0 25 22"><path d="M0 4H24.4M0 18.2H24.4M3.4 0V21.6" stroke="#7a7a7a" stroke-width="0.8"/><rect x="4.7" y="5.3" width="2.8" height="4.2" fill="#3778c4"/><rect x="8.4" y="5.3" width="2.8" height="4.2" fill="#3778c4"/><rect x="11.9" y="10.8" width="2.8" height="4.9" fill="#d9533c"/><rect x="15.6" y="10.8" width="2.8" height="4.9" fill="#d9533c"/><rect x="19.3" y="5.3" width="2.8" height="4.2" fill="#3778c4"/></svg>
<span class="t" style="left:665.40px;top:72px;font-size:9.7px;line-height:11px;color:#3e3e3e;transform:matrix(0.9829,0,0.0015,1,0,0);">Ganhos/</span>
<span class="t" style="left:669.60px;top:85px;font-size:9.7px;line-height:11px;color:#3e3e3e;transform:matrix(0.8989,0,0.0015,1,0,0);">Perdas</span>
<svg class="b" style="left:729.00px;top:45.60px" width="23" height="22.4" viewBox="0 0 23 22.4"><rect x="0.55" y="0.55" width="21.2" height="21.2" fill="#fff" stroke="#b5b5b5" stroke-width="1.1"/><rect x="0" y="0" width="22.3" height="2.2" fill="#6a6a6a"/>
<rect x="2.6" y="4.6" width="16.8" height="2.8" fill="#3c7fc9"/><rect x="2.6" y="9.6" width="9" height="2.6" fill="#3c7fc9"/><rect x="2.6" y="14.4" width="16.8" height="2.4" fill="#c3d8ef"/><rect x="2.6" y="18" width="16.8" height="2" fill="#c3d8ef"/>
<path d="M7.4 8.8 H21.8 L16.4 14 V19.8 L13 18 V14Z" fill="#787878" stroke="#fff" stroke-width="0.7"/></svg>
<span class="t" style="left:711.80px;top:72px;font-size:9.7px;line-height:11px;color:#3e3e3e;transform:matrix(0.9769,0,0.0015,1,0,0);">Segmentação</span>
<span class="t" style="left:721.50px;top:85px;font-size:9.7px;line-height:11px;color:#3e3e3e;transform:matrix(0.9401,0,0.0015,1,0,0);">de Dados</span>
<div class="b" style="left:4.00px;top:120.90px;width:90.00px;height:20.20px;background:#fff;border:1px solid #c8c8c8;"></div>
<span class="t" style="left:9.80px;top:126px;font-size:10.4px;line-height:11px;color:#444;transform:matrix(1.0153,0,0.0015,1,0,0);">Gráfico 4</span>
<svg class="b" style="left:83.20px;top:129.30px" width="5" height="3" viewBox="0 0 5 3"><path d="M0 0H4.8L2.4 2.6Z" fill="#666"/></svg>
<div class="b" style="left:105.30px;top:127.50px;width:1.30px;height:1.30px;background:#8f8f8f;"></div>
<div class="b" style="left:105.30px;top:130.70px;width:1.30px;height:1.30px;background:#8f8f8f;"></div>
<div class="b" style="left:105.30px;top:133.90px;width:1.30px;height:1.30px;background:#8f8f8f;"></div>
<div class="b" style="left:117.90px;top:120.90px;width:86.80px;height:20.20px;background:#fff;border:1px solid #c8c8c8;"></div>
<svg class="b" style="left:125.60px;top:125.00px" width="14" height="12.4" viewBox="0 0 14 12.4"><path d="M0.6 0.6L13.4 11.8M13.4 0.6L0.6 11.8" stroke="#c6c6c6" stroke-width="1.5"/></svg>
<svg class="b" style="left:153.20px;top:125.00px" width="17" height="13.4" viewBox="0 0 17 13.4"><path d="M1 7.4L6 12L15.4 1" fill="none" stroke="#c2c2c2" stroke-width="2.8"/></svg>
<span class="t" style="left:182.9px;top:121px;font-family:'Liberation Serif',serif;font-style:italic;font-weight:bold;font-size:18px;line-height:20px;color:#666;transform:matrix(0.97,0,0.0015,1,0,0);">fx</span>
<div class="b" style="left:207.20px;top:120.90px;width:570.00px;height:20.20px;background:#fff;border:1px solid #c8c8c8;"></div>
<div class="b" style="left:487.30px;top:60.00px;width:148.30px;height:148.20px;background:#fff;border:1px solid #c6c6c6;box-shadow:0 1px 4px rgba(0,0,0,0.28);"></div>
<div class="b" style="left:488.30px;top:61.00px;width:146.30px;height:17.20px;background:#f0f0f0;"></div>
<span class="t" style="left:495.10px;top:65px;font-size:9.8px;line-height:11px;color:#5f6677;transform:matrix(0.9846,0,0.0015,1,0,0);-webkit-text-stroke:0.4px #5f6677;">Barra 2D</span>
<div class="b" style="left:488.30px;top:127.10px;width:146.30px;height:14.70px;background:#f0f0f0;"></div>
<span class="t" style="left:495.10px;top:128px;font-size:9.8px;line-height:11px;color:#5f6677;transform:matrix(0.9846,0,0.0015,1,0,0);-webkit-text-stroke:0.4px #5f6677;">Barra 3D</span>
<div class="b" style="left:532.70px;top:79.10px;width:44.20px;height:47.00px;background:#d3f0e0;border:2.2px solid #e81c2a;"></div>
<svg class="b" style="left:494.50px;top:87.00px" width="33" height="30" viewBox="0 0 33 30"><path d="M0.5 0V28.6H31.6" fill="none" stroke="#8c8c8c" stroke-width="0.9"/><rect x="0.50" y="1.60" width="16.10" height="5.60" fill="#fff" stroke="#8c8c8c" stroke-width="0.9"/><rect x="0.50" y="7.20" width="23.90" height="5.80" fill="#d2d2d2" stroke="#8c8c8c" stroke-width="0.9"/><rect x="0.50" y="15.20" width="21.70" height="5.20" fill="#fff" stroke="#8c8c8c" stroke-width="0.9"/><rect x="0.50" y="20.40" width="16.10" height="6.00" fill="#d2d2d2" stroke="#8c8c8c" stroke-width="0.9"/></svg>
<svg class="b" style="left:539.30px;top:87.00px" width="33" height="30" viewBox="0 0 33 30"><path d="M0.5 0V28.6H31.6" fill="none" stroke="#8c8c8c" stroke-width="0.9"/><rect x="0.50" y="3.50" width="7.90" height="7.90" fill="#fff" stroke="#8c8c8c" stroke-width="0.9"/><rect x="8.40" y="3.50" width="14.00" height="7.90" fill="#d2d2d2" stroke="#8c8c8c" stroke-width="0.9"/><rect x="0.50" y="16.60" width="13.10" height="8.40" fill="#fff" stroke="#8c8c8c" stroke-width="0.9"/><rect x="13.60" y="16.60" width="13.60" height="8.40" fill="#d2d2d2" stroke="#8c8c8c" stroke-width="0.9"/></svg>
<svg class="b" style="left:583.00px;top:87.00px" width="33" height="30" viewBox="0 0 33 30"><path d="M0.5 0V28.6H31.6" fill="none" stroke="#8c8c8c" stroke-width="0.9"/><rect x="0.50" y="3.50" width="9.00" height="7.90" fill="#fff" stroke="#8c8c8c" stroke-width="0.9"/><rect x="9.50" y="3.50" width="18.30" height="7.90" fill="#d2d2d2" stroke="#8c8c8c" stroke-width="0.9"/><rect x="0.50" y="16.60" width="13.50" height="8.40" fill="#fff" stroke="#8c8c8c" stroke-width="0.9"/><rect x="14.00" y="16.60" width="13.80" height="8.40" fill="#d2d2d2" stroke="#8c8c8c" stroke-width="0.9"/></svg>
<svg class="b" style="left:494.80px;top:149.40px" width="33" height="32" viewBox="0 0 33 32"><path d="M3.4 0V27.4M0.4 30.4L3.4 27.4H31.6" fill="none" stroke="#8c8c8c" stroke-width="0.9"/><path d="M0.8 4.4L3.4000000000000004 1.8000000000000003H18.0L15.4 4.4Z" fill="#fff" stroke="#8c8c8c" stroke-width="0.9"/><path d="M15.4 4.4L18.0 1.8000000000000003V6.4L15.4 9.0Z" fill="#fff" stroke="#8c8c8c" stroke-width="0.9"/><rect x="0.8" y="4.4" width="14.6" height="4.6" fill="#fff" stroke="#8c8c8c" stroke-width="0.9"/><path d="M0.8 9.6L3.4000000000000004 7.0H25.000000000000004L22.400000000000002 9.6Z" fill="#d2d2d2" stroke="#8c8c8c" stroke-width="0.9"/><path d="M22.400000000000002 9.6L25.000000000000004 7.0V11.799999999999999L22.400000000000002 14.399999999999999Z" fill="#d2d2d2" stroke="#8c8c8c" stroke-width="0.9"/><rect x="0.8" y="9.6" width="21.6" height="4.8" fill="#d2d2d2" stroke="#8c8c8c" stroke-width="0.9"/><path d="M0.8 17.2L3.4000000000000004 14.6H22.8L20.2 17.2Z" fill="#fff" stroke="#8c8c8c" stroke-width="0.9"/><path d="M20.2 17.2L22.8 14.6V19.199999999999996L20.2 21.799999999999997Z" fill="#fff" stroke="#8c8c8c" stroke-width="0.9"/><rect x="0.8" y="17.2" width="19.4" height="4.6" fill="#fff" stroke="#8c8c8c" stroke-width="0.9"/><path d="M0.8 22.4L3.4000000000000004 19.799999999999997H18.0L15.4 22.4Z" fill="#d2d2d2" stroke="#8c8c8c" stroke-width="0.9"/><path d="M15.4 22.4L18.0 19.799999999999997V24.4L15.4 27.0Z" fill="#d2d2d2" stroke="#8c8c8c" stroke-width="0.9"/><rect x="0.8" y="22.4" width="14.6" height="4.6" fill="#d2d2d2" stroke="#8c8c8c" stroke-width="0.9"/></svg>
<svg class="b" style="left:539.60px;top:149.40px" width="33" height="32" viewBox="0 0 33 32"><path d="M3.4 0V27.4M0.4 30.4L3.4 27.4H31.6" fill="none" stroke="#8c8c8c" stroke-width="0.9"/><path d="M0.8 5.6L3.4000000000000004 2.9999999999999996H9.8L7.2 5.6Z" fill="#fff" stroke="#8c8c8c" stroke-width="0.9"/><path d="M7.2 5.6L9.8 2.9999999999999996V9.6L7.2 12.2Z" fill="#fff" stroke="#8c8c8c" stroke-width="0.9"/><rect x="0.8" y="5.6" width="6.4" height="6.6" fill="#fff" stroke="#8c8c8c" stroke-width="0.9"/><path d="M7.2 5.6L9.8 2.9999999999999996H22.400000000000002L19.8 5.6Z" fill="#d2d2d2" stroke="#8c8c8c" stroke-width="0.9"/><path d="M19.8 5.6L22.400000000000002 2.9999999999999996V9.6L19.8 12.2Z" fill="#d2d2d2" stroke="#8c8c8c" stroke-width="0.9"/><rect x="7.2" y="5.6" width="12.6" height="6.6" fill="#d2d2d2" stroke="#8c8c8c" stroke-width="0.9"/><path d="M0.8 18.6L3.4000000000000004 16.0H15.0L12.4 18.6Z" fill="#fff" stroke="#8c8c8c" stroke-width="0.9"/><path d="M12.4 18.6L15.0 16.0V22.6L12.4 25.200000000000003Z" fill="#fff" stroke="#8c8c8c" stroke-width="0.9"/><rect x="0.8" y="18.6" width="11.6" height="6.6" fill="#fff" stroke="#8c8c8c" stroke-width="0.9"/><path d="M12.4 18.6L15.0 16.0H28.0L25.4 18.6Z" fill="#d2d2d2" stroke="#8c8c8c" stroke-width="0.9"/><path d="M25.4 18.6L28.0 16.0V22.6L25.4 25.200000000000003Z" fill="#d2d2d2" stroke="#8c8c8c" stroke-width="0.9"/><rect x="12.4" y="18.6" width="13" height="6.6" fill="#d2d2d2" stroke="#8c8c8c" stroke-width="0.9"/></svg>
<div class="b" style="left:488.30px;top:185.50px;width:146.30px;height:1.00px;background:#e8e8e8;"></div>
<svg class="b" style="left:491.20px;top:191.20px" width="13" height="12" viewBox="0 0 13 12"><path d="M0.6 0V11.6" stroke="#777" stroke-width="0.9"/><path d="M0.6 2.6H12" stroke="#555" stroke-width="1.7"/><path d="M0.6 5.1H7.6M0.6 7.2H8.8M0.6 9.3H6.4" stroke="#909090" stroke-width="1.2"/><path d="M0.2 11.3H12.6" stroke="#666" stroke-width="1"/></svg>
<span class="t" style="left:513.40px;top:192px;font-size:10.0px;line-height:11px;color:#444;transform:matrix(0.9145,0,0.0015,1,0,0);">Mais Gráficos</span>
<div class="b" style="left:513.20px;top:202.30px;width:7.60px;height:0.80px;background:#777;"></div>
<div class="b" style="left:569.20px;top:128.80px;width:151.90px;height:137.20px;background:#fff;border:1px solid #c4c4c4;box-shadow:0 1px 4px rgba(0,0,0,0.28);"></div>
<span class="t" style="left:579.00px;top:135px;font-size:9.6px;line-height:11px;color:#3f3f3f;font-weight:bold;transform:matrix(0.8997,0,0.0015,1,0,0);">Barras Empilhadas</span>
<span class="t" style="left:578.90px;top:152px;font-size:9.6px;line-height:11px;color:#4a4a4a;transform:matrix(0.9878,0,0.0015,1,0,0);">Use este tipo de gráfico para:</span>
<span class="t" style="left:578.90px;top:164px;font-size:9.6px;line-height:11px;color:#4a4a4a;transform:matrix(0.9876,0,0.0015,1,0,0);">• Comparar partes de um todo</span>
<span class="t" style="left:578.90px;top:175px;font-size:9.6px;line-height:11px;color:#4a4a4a;transform:matrix(0.9908,0,0.0015,1,0,0);">entre categorias.</span>
<span class="t" style="left:578.90px;top:187px;font-size:9.6px;line-height:11px;color:#4a4a4a;transform:matrix(0.9878,0,0.0015,1,0,0);">• Mostrar como partes de um</span>
<span class="t" style="left:578.90px;top:199px;font-size:9.6px;line-height:11px;color:#4a4a4a;transform:matrix(0.9876,0,0.0015,1,0,0);">todo são alteradas ao longo do</span>
<span class="t" style="left:578.90px;top:211px;font-size:9.6px;line-height:11px;color:#4a4a4a;transform:matrix(1.0025,0,0.0015,1,0,0);">tempo</span>
<span class="t" style="left:578.90px;top:234px;font-size:9.6px;line-height:11px;color:#4a4a4a;transform:matrix(0.9917,0,0.0015,1,0,0);">Use-o quando:</span>
<span class="t" style="left:578.90px;top:246px;font-size:9.6px;line-height:11px;color:#4a4a4a;transform:matrix(0.9875,0,0.0015,1,0,0);">• O texto da categoria for longo.</span>
</div></div></body></html>
